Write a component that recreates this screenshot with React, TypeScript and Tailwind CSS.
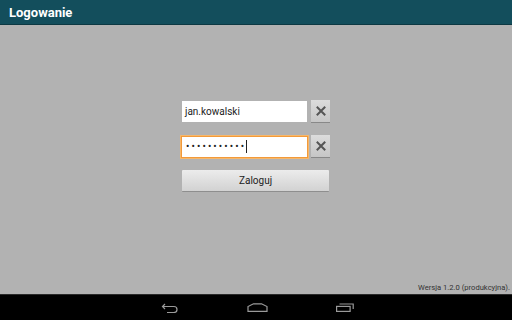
import React, { useState } from 'react';

export default function App() {
    const [login, setLogin] = useState('jan.kowalski');
    const [password, setPassword] = useState('•••••••••••');

    return (
        <div className="w-[512px] h-[320px] flex flex-col bg-[#b2b2b2] font-['Roboto',sans-serif] overflow-hidden">
            <header className="h-[25px] shrink-0 bg-[#134e5c] border-b border-[#0d3943] flex items-center pl-[9px]">
                <span className="text-white text-[13px] font-bold leading-none">Logowanie</span>
            </header>

            <main className="flex-1 flex flex-col">
                <div className="flex-1 flex flex-col items-start pl-[182px] pt-[75px]">
                    <div className="flex items-center gap-[4px]">
                        <div className="w-[125px] h-[21px] bg-white flex items-center px-[3px]">
                            <span className="text-[10px] text-[#222]">{login}</span>
                        </div>
                        <ClearButton onClick={() => setLogin('')} />
                    </div>

                    <div className="flex items-center gap-[3px] mt-[12px] -ml-px">
                        <div className="w-[127px] h-[22px] bg-white border border-[#f29a3a] shadow-[0_0_0_1px_#f7b76a] flex items-center pl-[4px]">
                            <span className="text-[10px] tracking-[2.1px] text-[#222] leading-none">{password}</span>
                            <span className="w-px h-[13px] bg-[#222]" />
                        </div>
                        <ClearButton onClick={() => setPassword('')} />
                    </div>

                    <button className="mt-[12px] w-[147px] h-[22px] rounded-[1px] bg-gradient-to-b from-[#ececec] to-[#d2d2d2] border-b border-[#8e8e8e] text-[10px] text-[#222] flex items-center justify-center">
                        Zaloguj
                    </button>
                </div>

                <div className="flex justify-end pr-[2px] pb-[2px]">
                    <span className="text-[7.6px] text-[#333] leading-none">Wersja 1.2.0 (produkcyjna).</span>
                </div>
            </main>

            <nav className="h-[26px] shrink-0 bg-black border-t border-[#2a2a2a] flex items-center">
                <div className="flex items-center w-full pl-[161px] gap-[68px]">
                    <svg width="18" height="10" viewBox="0 0 18 10" fill="none" stroke="#9a9a9a" strokeWidth="1.2">
                        <path d="M4 1 L1.5 3.5 L4 6" />
                        <path d="M1.5 3.5 H13 A3 3 0 0 1 13 9.5 H6" />
                    </svg>
                    <svg width="21" height="9" viewBox="0 0 21 9" fill="none" stroke="#9a9a9a" strokeWidth="1.2">
                        <path d="M1 8.4 V3.5 L6.5 0.8 H14.5 L20 3.5 V8.4 Z" />
                    </svg>
                    <svg width="18" height="9" viewBox="0 0 18 9" fill="none" stroke="#9a9a9a" strokeWidth="1.2">
                        <rect x="0.6" y="3.4" width="13.5" height="5" />
                        <path d="M3.5 1 H17.2 V6" />
                    </svg>
                </div>
            </nav>
        </div>
    );
}

function ClearButton({ onClick }: { onClick: () => void }) {
    return (
        <button
            onClick={onClick}
            className="w-[19px] h-[23px] bg-gradient-to-b from-[#dcdcdc] to-[#c6c6c6] border-b border-[#888] flex items-center justify-center"
        >
            <svg width="10" height="10" viewBox="0 0 10 10" stroke="#555" strokeWidth="2" strokeLinecap="square">
                <path d="M1.5 1.5 L8.5 8.5 M8.5 1.5 L1.5 8.5" />
            </svg>
        </button>
    );
}
